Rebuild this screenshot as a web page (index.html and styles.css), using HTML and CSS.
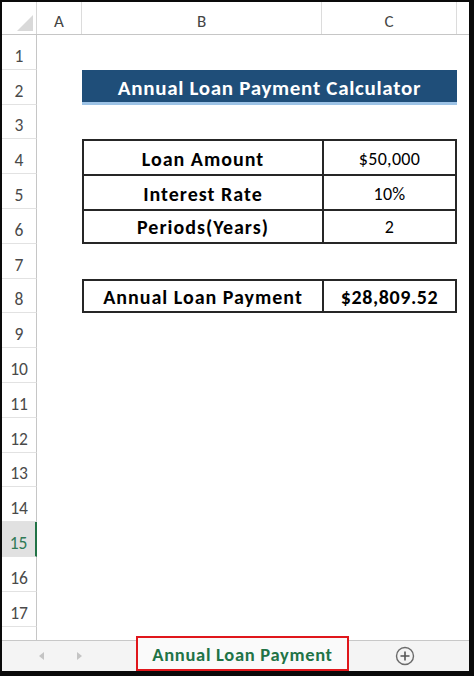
FILE: index.html
```html
<!DOCTYPE html>
<html>
<head>
<meta charset="utf-8">
<link rel="stylesheet" href="styles.css">
</head>
<body>
<div class="frame">
  <div class="sheet">
    <div class="row head">
      <div class="corner"><span class="tri"></span></div>
      <div class="colh">A</div>
      <div class="colh">B</div>
      <div class="colh">C</div>
      <div class="colh tail"></div>
    </div>
    <div class="row"><div class="rh">1</div><div></div><div></div><div></div><div></div></div>
    <div class="row"><div class="rh">2</div><div></div><div class="banner">Annual Loan Payment Calculator</div><div></div></div>
    <div class="row"><div class="rh">3</div><div></div><div></div><div></div><div></div></div>
    <div class="row"><div class="rh">4</div><div></div><div class="cell lbl">Loan Amount</div><div class="cell val">$50,000</div><div></div></div>
    <div class="row"><div class="rh">5</div><div></div><div class="cell lbl">Interest Rate</div><div class="cell val">10%</div><div></div></div>
    <div class="row"><div class="rh">6</div><div></div><div class="cell lbl last">Periods(Years)</div><div class="cell val last">2</div><div></div></div>
    <div class="row"><div class="rh">7</div><div></div><div></div><div></div><div></div></div>
    <div class="row"><div class="rh">8</div><div></div><div class="cell lbl last">Annual Loan Payment</div><div class="cell val last bold">$28,809.52</div><div></div></div>
    <div class="row"><div class="rh">9</div><div></div><div></div><div></div><div></div></div>
    <div class="row"><div class="rh">10</div><div></div><div></div><div></div><div></div></div>
    <div class="row"><div class="rh">11</div><div></div><div></div><div></div><div></div></div>
    <div class="row"><div class="rh">12</div><div></div><div></div><div></div><div></div></div>
    <div class="row"><div class="rh">13</div><div></div><div></div><div></div><div></div></div>
    <div class="row"><div class="rh">14</div><div></div><div></div><div></div><div></div></div>
    <div class="row"><div class="rh sel">15</div><div></div><div></div><div></div><div></div></div>
    <div class="row"><div class="rh">16</div><div></div><div></div><div></div><div></div></div>
    <div class="row"><div class="rh">17</div><div></div><div></div><div></div><div></div></div>
    <div class="row filler"><div class="rh blank"></div><div></div></div>
  </div>
  <div class="tabbar">
    <div class="nav">
      <span class="arrow left"></span>
      <span class="arrow right"></span>
    </div>
    <div class="tab">Annual Loan Payment</div>
    <div class="rest">
      <svg class="plus" width="20" height="20" viewBox="0 0 20 20">
        <circle cx="10" cy="10" r="8.5" fill="none" stroke="#6b6b6b" stroke-width="1.4"/>
        <path d="M10 5.5V14.5M5.5 10H14.5" stroke="#555" stroke-width="1.6" fill="none"/>
      </svg>
    </div>
  </div>
</div>
</body>
</html>
```

FILE: styles.css
```css
* { box-sizing: border-box; }
html, body { margin: 0; padding: 0; background: #000; }
body { width: 474px; height: 676px; overflow: hidden; }

.frame {
  width: 474px;
  height: 676px;
  border-style: solid;
  border-color: #0a0a0a;
  border-width: 2px 5px 5px 2px;
  background: #fff;
  display: flex;
  flex-direction: column;
  font-family: "Carlito", "Lato", "Open Sans", sans-serif;
}

.sheet { display: flex; flex-direction: column; }

.row {
  display: grid;
  grid-template-columns: 35px 45px 240px 135px 12px;
  height: 34.8px;
}
.row.head { height: 33px; border-bottom: 1px solid #c6c6c6; }
.row.filler { flex: none; height: 13px; }

.corner {
  border-right: 1px solid #d6d6d6;
  display: flex;
  align-items: flex-end;
  justify-content: flex-end;
  padding: 0 3px 3px 0;
}
.tri {
  width: 0; height: 0;
  border-style: solid;
  border-width: 0 0 16px 16px;
  border-color: transparent transparent #d9d9d9 transparent;
}
.colh {
  border-right: 1px solid #dcdcdc;
  display: flex;
  align-items: center;
  justify-content: center;
  color: #444;
  font-size: 17px;
  padding-top: 6px;
}
.colh.tail { border-right: none; }

.rh {
  border-right: 1px solid #c6c6c6;
  border-bottom: 1px solid #e2e2e2;
  display: flex;
  align-items: center;
  justify-content: center;
  color: #4a4a4a;
  font-size: 17.5px;
  padding-top: 8px;
}
.rh.sel {
  background: #e1e1e1;
  border-right: 2px solid #217346;
  color: #2f7a56;
}
.rh.blank { border-bottom: none; }

.banner {
  grid-column: 3 / span 2;
  background: #1f4e79;
  border-bottom: 3px solid #9dc3e6;
  color: #fff;
  font-weight: 700;
  font-size: 21px;
  letter-spacing: 0.7px;
  display: flex;
  align-items: center;
  justify-content: center;
  padding-top: 4px;
}

.cell {
  border-top: 2px solid #262626;
  border-left: 2px solid #262626;
  display: flex;
  align-items: center;
  justify-content: center;
  font-size: 18px;
  letter-spacing: 0.3px;
  color: #000;
  padding-top: 2px;
}
.cell.val { border-right: 2px solid #262626; }
.cell.last { border-bottom: 2px solid #262626; }
.lbl { font-weight: 700; font-size: 20px; letter-spacing: 1px; }
.cell.bold { font-weight: 700; font-size: 20px; letter-spacing: 0.6px; }

.tabbar {
  flex: 1;
  display: flex;
  align-items: stretch;
  border-top: 1px solid #c8c8c8;
  background: #f4f4f4;
}
.nav {
  width: 134px;
  display: flex;
  align-items: center;
  padding-left: 37px;
  gap: 33px;
}
.arrow {
  width: 0; height: 0;
  border-style: solid;
}
.arrow.left { border-width: 4px 5px 4px 0; border-color: transparent #c4c4c4 transparent transparent; }
.arrow.right { border-width: 4px 0 4px 5px; border-color: transparent transparent transparent #c4c4c4; }

.tab {
  width: 213px;
  margin-top: -5px;
  border: 2.5px solid #e0161b;
  background: #fafafa;
  color: #217346;
  font-weight: 700;
  font-size: 18.5px;
  letter-spacing: 0.7px;
  display: flex;
  align-items: center;
  justify-content: center;
  padding-top: 3px;
}
.rest {
  flex: 1;
  display: flex;
  align-items: center;
  padding-left: 46px;
  padding-top: 1px;
}
```
